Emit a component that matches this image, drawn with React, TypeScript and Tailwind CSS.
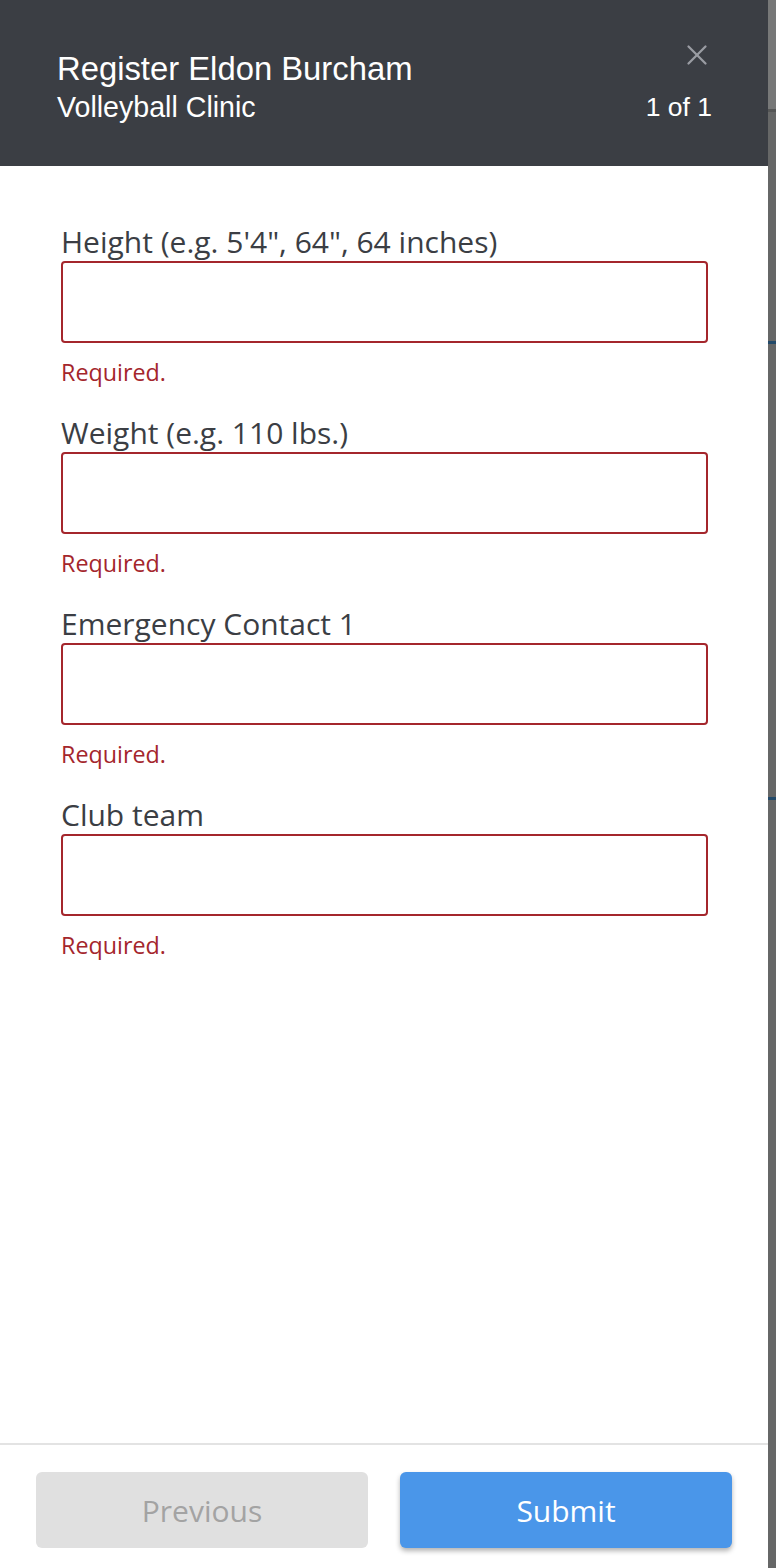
import { X } from "lucide-react";

const fields = [
  "Height (e.g. 5'4\", 64\", 64 inches)",
  "Weight (e.g. 110 lbs.)",
  "Emergency Contact 1",
  "Club team",
];

const Field = ({ label }: { label: string }) => {
  return (
    <div className="flex flex-col">
      <label className="text-[30px] leading-[33px] text-[#3b3e44]">{label}</label>
      <input className="mt-[3px] h-[82px] w-full rounded-[4px] border-2 border-[#a4262c] bg-white px-3 text-[24px] outline-none" />
      <span className="mt-[16px] text-[23.3px] leading-[26px] text-[#a4262c]">Required.</span>
    </div>
  );
};

const App = () => {
  return (
    <div className="flex h-[1568px] w-[776px] font-['Open_Sans',sans-serif]">
      <div className="flex h-full w-[768px] flex-col bg-white">
        <div className="flex h-[166px] shrink-0 justify-between bg-[#3b3e44] pl-[57px] pr-[56px] pt-[50px] font-['Liberation_Sans',sans-serif] text-white">
          <div className="flex flex-col">
            <h1 className="text-[32.8px] leading-[38px]">Register Eldon Burcham</h1>
            <p className="text-[28.6px] leading-[38px]">Volleyball Clinic</p>
          </div>
          <div className="flex flex-col items-end">
            <button className="-mt-[12px] mr-[-2px] flex h-[34px] w-[34px] items-center justify-center text-[#9a9ca3]">
              <X size={34} strokeWidth={1.6} />
            </button>
            <span className="mt-[16px] text-[26.5px] leading-[38px]">1 of 1</span>
          </div>
        </div>
        <div className="flex flex-1 flex-col gap-[31px] pl-[61px] pr-[60px] pt-[59px]">
          {fields.map((f) => (
            <Field key={f} label={f} />
          ))}
        </div>
        <div className="flex shrink-0 gap-[32px] border-t-2 border-[#e3e3e3] px-[36px] pb-[20px] pt-[27px]">
          <button className="h-[76px] flex-1 rounded-[6px] bg-[#e0e0e0] text-[30px] text-[#a3a3a3]">
            Previous
          </button>
          <button className="h-[76px] flex-1 rounded-[6px] bg-[#4a96e9] text-[30px] text-white shadow-[0_3px_5px_rgba(0,0,0,0.3)]">
            Submit
          </button>
        </div>
      </div>
      <div className="flex w-[8px] flex-col bg-[#666767]">
        <div className="h-[109px] bg-[#777878]" />
        <div className="h-[3px] bg-[#555656]" />
        <div className="h-[229px]" />
        <div className="h-[3px] bg-[#234a6a]" />
        <div className="h-[453px]" />
        <div className="h-[3px] bg-[#234a6a]" />
      </div>
    </div>
  );
};

export default App;
